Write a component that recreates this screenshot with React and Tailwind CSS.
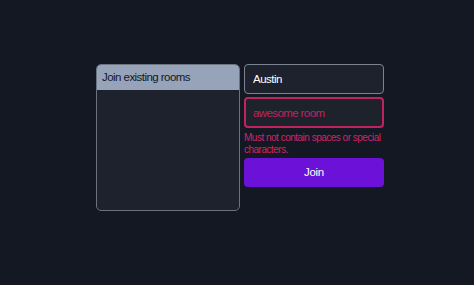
import React, { useState } from "react";

export default function App() {
  const [name, setName] = useState("Austin");
  const [room, setRoom] = useState("awesome room");

  const invalid = /[^a-zA-Z0-9_-]/.test(room);

  return (
    <div
      className="min-h-screen bg-[#141822] pt-[64px] pl-[96px]"
      style={{ fontFamily: "'Liberation Sans', Arial, sans-serif" }}
    >
      <div className="flex gap-[4px]">
        <section className="w-[144px] h-[147px] rounded-[5px] border border-[#6b7280] bg-[#1e222d] overflow-hidden flex flex-col">
          <div className="h-[25px] bg-[#97a3b8] px-[5px] flex items-center text-[11.5px] tracking-[-0.55px] text-[#111827]">
            Join existing rooms
          </div>
          <div className="flex-1" />
        </section>

        <div className="w-[140px] flex flex-col">
          <input
            value={name}
            onChange={(e) => setName(e.target.value)}
            className="h-[30px] rounded-[4px] border border-[#7b8290] bg-[#1e222d] px-[8px] text-[11.5px] tracking-[-0.5px] text-white outline-none"
          />
          <input
            value={room}
            onChange={(e) => setRoom(e.target.value)}
            className={
              "mt-[3px] h-[31px] rounded-[4px] border-2 bg-[#1e222d] px-[7px] text-[11.5px] tracking-[-0.6px] outline-none " +
              (invalid
                ? "border-[#c0245f] text-[#c0245f]"
                : "border-[#7b8290] text-white")
            }
          />
          {invalid && (
            <p className="mt-[4px] text-[10px] leading-[12px] tracking-[-0.5px] text-[#d0246a]">
              Must not contain spaces or special characters.
            </p>
          )}
          <button className="mt-[2px] h-[29px] rounded-[4px] bg-[#6c12d8] text-[11.5px] tracking-[-0.3px] text-white">
            Join
          </button>
        </div>
      </div>
    </div>
  );
}
